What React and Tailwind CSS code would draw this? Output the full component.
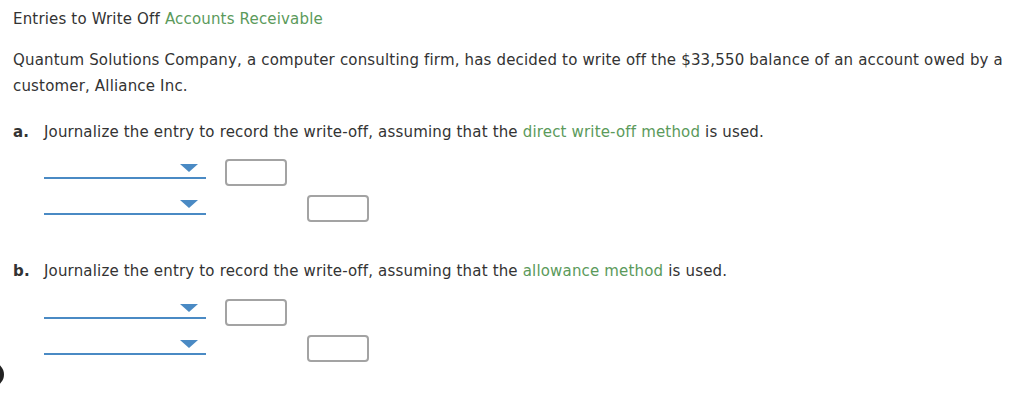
import React from 'react';

const Dropdown = () => (
  <div className="relative w-[162px] h-[20px] border-b-2 border-[#4a8ac4]">
    <svg className="absolute right-[8px] top-[5px]" width="18" height="8" viewBox="0 0 18 8">
      <polygon points="0,0 18,0 9,8" fill="#4a8ac4" />
    </svg>
  </div>
);

const Box = () => (
  <div className="w-[62px] h-[27px] border-2 border-[#a3a3a3] rounded-[4px] bg-white" />
);

const Journal = () => (
  <div className="pl-[44px] flex flex-col gap-[9px]">
    <div className="flex items-start h-[27px]">
      <Dropdown />
      <div className="ml-[19px]">
        <Box />
      </div>
    </div>
    <div className="flex items-start h-[27px]">
      <Dropdown />
      <div className="ml-[101px]">
        <Box />
      </div>
    </div>
  </div>
);

const Green = ({ children }) => <span className="text-[#5b9a5b]">{children}</span>;

export default function App() {
  return (
    <div
      className="relative w-[1024px] h-[420px] bg-white text-[#333] text-[15px] tracking-[0.17px] overflow-hidden"
      style={{ fontFamily: '"DejaVu Sans", Verdana, sans-serif' }}
    >
      <div className="absolute left-[-21px] top-[362px] w-[25px] h-[25px] rounded-full bg-[#222]" />

      <div className="pl-[13px] pt-[9px]">
        <p className="leading-[20px]">
          Entries to Write Off <Green>Accounts Receivable</Green>
        </p>

        <p className="mt-[18px] leading-[26px] w-[990px]">
          Quantum Solutions Company, a computer consulting firm, has decided to write off the
          $33,550 balance of an account owed by a customer, Alliance Inc.
        </p>

        <p className="mt-[23px] leading-[20px]">
          <span className="inline-block w-[31px] font-bold">a.</span>Journalize the entry to record
          the write-off, assuming that the <Green>direct write-off method</Green> is used.
        </p>
      </div>

      <div className="mt-[17px]">
        <Journal />
      </div>

      <div className="pl-[13px] mt-[39px]">
        <p className="leading-[20px]">
          <span className="inline-block w-[31px] font-bold">b.</span>Journalize the entry to record
          the write-off, assuming that the <Green>allowance method</Green> is used.
        </p>
      </div>

      <div className="mt-[18px]">
        <Journal />
      </div>
    </div>
  );
}
